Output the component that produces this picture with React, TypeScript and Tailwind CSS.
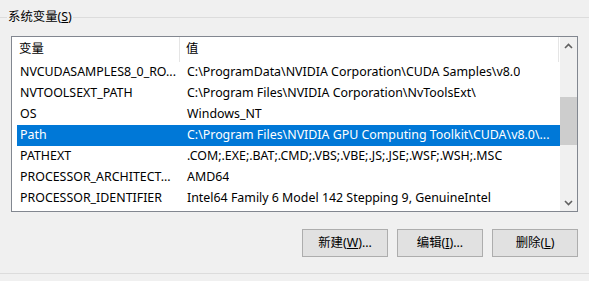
import React from "react";

const rows: [string, string, boolean?][] = [
  ["NVCUDASAMPLES8_0_RO...", "C:\\ProgramData\\NVIDIA Corporation\\CUDA Samples\\v8.0"],
  ["NVTOOLSEXT_PATH", "C:\\Program Files\\NVIDIA Corporation\\NvToolsExt\\"],
  ["OS", "Windows_NT"],
  ["Path", "C:\\Program Files\\NVIDIA GPU Computing Toolkit\\CUDA\\v8.0\\...", true],
  ["PATHEXT", ".COM;.EXE;.BAT;.CMD;.VBS;.VBE;.JS;.JSE;.WSF;.WSH;.MSC"],
  ["PROCESSOR_ARCHITECT...", "AMD64"],
  ["PROCESSOR_IDENTIFIER", "Intel64 Family 6 Model 142 Stepping 9, GenuineIntel"],
];

const font = { fontFamily: '"Noto Sans", "Noto Sans CJK SC", sans-serif' };

function Btn({ label, k, tail }: { label: string; k: string; tail?: string }) {
  return (
    <button className="w-[86px] h-[28px] bg-[#e1e1e1] border border-[#adadad] text-[12.4px] text-black flex items-center justify-center">
      <span>
        {label}(<span className="underline">{k}</span>){tail}
      </span>
    </button>
  );
}

export default function App() {
  return (
    <div className="w-[589px] h-[281px] bg-[#f0f0f0] overflow-hidden" style={font}>
      <div className="pt-[17px]">
        <div className="relative border-t border-b border-[#dcdcdc] h-[257px]">
          <div className="absolute left-[7px] top-[-9px] bg-[#f0f0f0] px-[1px] text-[12.4px] leading-[16px] text-black">
            系统变量(<span className="underline">S</span>)
          </div>
          <div className="pl-[11px] pt-[18px]">
            <div className="w-[567px] h-[176px] border border-[#828790] bg-white flex">
              <div className="flex-1 flex flex-col">
                <div className="h-[25px] flex text-[12.4px] text-black">
                  <div className="w-[168px] pl-[7px] flex items-center border-r border-[#e5e5e5]">变量</div>
                  <div className="flex-1 pl-[6px] flex items-center border-r border-[#e5e5e5] mr-[1px]">值</div>
                </div>
                <div className="pl-[5px] flex flex-col">
                  {rows.map(([n, v, sel]) => (
                    <div
                      key={n}
                      className={`h-[21px] flex items-center text-[12.4px] whitespace-nowrap ${sel ? "bg-[#0078d7] text-white" : "text-black"}`}
                    >
                      <div className="w-[163px] pl-[3px] overflow-hidden">{n}</div>
                      <div className="pl-[7px] overflow-hidden">{v}</div>
                    </div>
                  ))}
                </div>
              </div>
              <div className="w-[17px] bg-[#f0f0f0] flex flex-col items-center">
                <div className="h-[17px] w-full flex items-center justify-center">
                  <svg width="9" height="6" viewBox="0 0 9 6">
                    <path d="M1 5 L4.5 1.5 L8 5" stroke="#606060" strokeWidth="1.6" fill="none" />
                  </svg>
                </div>
                <div className="h-[43px]" />
                <div className="h-[48px] w-full bg-[#cdcdcd]" />
                <div className="flex-1" />
                <div className="h-[17px] w-full flex items-center justify-center">
                  <svg width="9" height="6" viewBox="0 0 9 6">
                    <path d="M1 1 L4.5 4.5 L8 1" stroke="#606060" strokeWidth="1.6" fill="none" />
                  </svg>
                </div>
              </div>
            </div>
            <div className="flex justify-end gap-[9px] w-[567px] mt-[17px]">
              <Btn label="新建" k="W" tail="..." />
              <Btn label="编辑" k="I" tail="..." />
              <Btn label="删除" k="L" />
            </div>
          </div>
        </div>
      </div>
    </div>
  );
}
